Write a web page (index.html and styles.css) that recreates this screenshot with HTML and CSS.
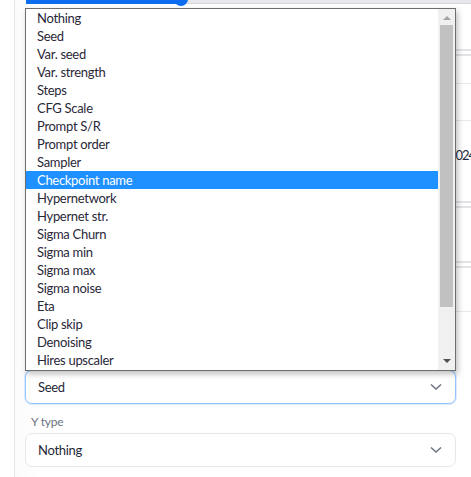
FILE: index.html
```html
<!DOCTYPE html>
<html lang="en">
<head>
    <meta charset="UTF-8">
    <meta name="viewport" content="width=device-width, initial-scale=1.0">
    <title>X/Y plot</title>
    <link rel="stylesheet" href="styles.css">
</head>
<body>
    <div class="page">
        <div class="panel">
            <div class="slider">
                <div class="slider-fill"></div>
                <div class="slider-thumb"></div>
            </div>

            <div class="back">
                <div class="band b1"></div>
                <div class="rule r1"></div>
                <div class="rule r2"></div>
                <div class="back-text">1024</div>
                <div class="band b2"></div>
                <div class="band b3"></div>
                <div class="rule r3"></div>
            </div>

            <div class="field">
                <div class="select focused">
                    <span>Seed</span>
                    <svg class="chev" width="12" height="8" viewBox="0 0 12 8"><path d="M1 1.5 L6 6 L11 1.5" fill="none" stroke="#6b7280" stroke-width="1.5"/></svg>
                </div>
            </div>

            <div class="field">
                <label class="label">Y type</label>
                <div class="select">
                    <span>Nothing</span>
                    <svg class="chev" width="12" height="8" viewBox="0 0 12 8"><path d="M1 1.5 L6 6 L11 1.5" fill="none" stroke="#6b7280" stroke-width="1.5"/></svg>
                </div>
            </div>
        </div>

        <div class="listbox">
            <ul class="options">
                <li>Nothing</li>
                <li>Seed</li>
                <li>Var. seed</li>
                <li>Var. strength</li>
                <li>Steps</li>
                <li>CFG Scale</li>
                <li>Prompt S/R</li>
                <li>Prompt order</li>
                <li>Sampler</li>
                <li class="selected">Checkpoint name</li>
                <li>Hypernetwork</li>
                <li>Hypernet str.</li>
                <li>Sigma Churn</li>
                <li>Sigma min</li>
                <li>Sigma max</li>
                <li>Sigma noise</li>
                <li>Eta</li>
                <li>Clip skip</li>
                <li>Denoising</li>
                <li>Hires upscaler</li>
            </ul>
            <div class="scrollbar">
                <div class="arrow up"></div>
                <div class="thumb"></div>
                <div class="arrow down"></div>
            </div>
        </div>
    </div>
</body>
</html>
```

FILE: styles.css
```css
* {
    margin: 0;
    padding: 0;
    box-sizing: border-box;
}

body {
    font-family: 'Source Sans Pro', Lato, 'Noto Sans', sans-serif;
    background: #fff;
    width: 471px;
    height: 477px;
    overflow: hidden;
}

.page {
    position: relative;
    height: 477px;
    padding-left: 14px;
}

.panel {
    height: 100%;
    border-left: 1px solid #e5e7eb;
    background: linear-gradient(90deg, #fbfbfc 0, #fff 30px);
    padding: 0 15px 0 10px;
}

.slider {
    position: relative;
    height: 4px;
    margin-left: 1px;
    margin-right: -15px;
    background: #e5e7eb;
    border-bottom: 1px solid #d4d6da;
}

.slider-fill {
    width: 158px;
    height: 4px;
    background: #0b6cf0;
}

.slider-thumb {
    position: absolute;
    left: 148px;
    top: -8px;
    width: 14px;
    height: 14px;
    border-radius: 50%;
    background: #0b6cf0;
}

.back {
    position: relative;
    height: 366px;
    margin-right: -15px;
    overflow: hidden;
}

.band, .rule {
    position: absolute;
    left: 0;
    right: 0;
}

.band {
    height: 7px;
    border-top: 2px solid #e2e3e6;
    border-bottom: 2px solid #e2e3e6;
}

.rule {
    height: 1px;
    background: #e8e9ec;
}

.b1 { top: 45px; }
.r1 { top: 79px; }
.r2 { top: 116px; }
.b2 { top: 197px; }
.b3 { top: 257px; }
.r3 { top: 307px; }

.back-text {
    position: absolute;
    left: 424px;
    top: 143px;
    font-size: 13px;
    letter-spacing: -1px;
    color: #1f2a44;
}

.field {
    margin-bottom: 10px;
}

.label {
    display: block;
    font-size: 12px;
    color: #6b7280;
    margin: 0 0 3px 6px;
    line-height: 16px;
    letter-spacing: -0.2px;
}

.select {
    height: 34px;
    border: 1px solid #e5e7eb;
    border-radius: 7px;
    background: #fff;
    display: flex;
    align-items: center;
    justify-content: space-between;
    padding: 0 13px 0 12px;
    font-size: 13px;
    letter-spacing: -0.3px;
    color: #1f2937;
}

.select.focused {
    border-color: #93c5fd;
    box-shadow: 0 0 0 1px #dbeafe;
}

.listbox {
    position: absolute;
    left: 25px;
    top: 8px;
    width: 431px;
    height: 363px;
    border: 1px solid #6e6e6e;
    background: #fff;
    box-shadow: 2px 3px 6px rgba(0, 0, 0, 0.25);
    display: flex;
}

.options {
    list-style: none;
    flex: 1;
}

.options li {
    height: 18px;
    line-height: 18px;
    padding-left: 11px;
    font-size: 13px;
    letter-spacing: -0.3px;
    color: #2a2838;
}

.options li.selected {
    background: #1e90ff;
    color: #fff;
}

.scrollbar {
    width: 17px;
    background: #f0f0f0;
    display: flex;
    flex-direction: column;
    align-items: center;
}

.arrow {
    width: 0;
    height: 0;
    border-left: 4px solid transparent;
    border-right: 4px solid transparent;
}

.arrow.up {
    margin: 7px 0 5px;
    border-bottom: 4px solid #a3a3a3;
}

.arrow.down {
    margin: auto 0 7px;
    border-top: 4px solid #505050;
}

.thumb {
    width: 13px;
    height: 282px;
    background: #c1c1c1;
}
```
